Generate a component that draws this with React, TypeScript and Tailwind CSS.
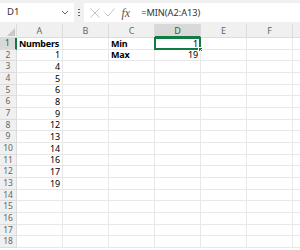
import React from "react";

const cols = ["A", "B", "C", "D", "E", "F", "G"];
const numbers = [1, 4, 5, 6, 8, 9, 12, 13, 14, 16, 17, 19];

type Cell = { text?: string; bold?: boolean; right?: boolean };

function cellFor(r: number, c: number): Cell {
  if (c === 0) {
    if (r === 1) return { text: "Numbers", bold: true };
    if (r >= 2 && r <= 13) return { text: String(numbers[r - 2]), right: true };
  }
  if (c === 2) {
    if (r === 1) return { text: "Min", bold: true };
    if (r === 2) return { text: "Max", bold: true };
  }
  if (c === 3) {
    if (r === 1) return { text: "1", right: true };
    if (r === 2) return { text: "19", right: true };
  }
  return {};
}

export default function App() {
  const rows = Array.from({ length: 18 }, (_, i) => i + 1);
  return (
    <div
      className="w-[300px] h-[250px] overflow-hidden bg-white relative"
      style={{ fontFamily: '"Noto Sans", "Open Sans", sans-serif' }}
    >
      {/* formula bar */}
      <div className="h-[24px] bg-[#f0f0f0] flex items-center gap-[3px] pt-[1px]">
        <div className="h-[19px] w-[74px] bg-white flex items-center justify-between pl-[7px] pr-[5px]">
          <span className="text-[9.5px] text-[#333]">D1</span>
          <svg width="8" height="5" viewBox="0 0 8 5">
            <path d="M1 1 L4 4 L7 1" stroke="#666" strokeWidth="1" fill="none" />
          </svg>
        </div>
        <div className="flex flex-col gap-[1.5px] px-[1px]">
          <div className="w-[1.5px] h-[1.5px] bg-[#666]" />
          <div className="w-[1.5px] h-[1.5px] bg-[#666]" />
          <div className="w-[1.5px] h-[1.5px] bg-[#666]" />
        </div>
        <div className="h-[19px] flex-1 bg-white flex items-center">
          <div className="flex items-center gap-[4px] pl-[6px] pr-[11px]">
            <svg width="10" height="10" viewBox="0 0 10 10">
              <path d="M0.5 0.5 L9.5 9.5 M9.5 0.5 L0.5 9.5" stroke="#c4c4c4" strokeWidth="1" />
            </svg>
            <svg width="11" height="9" viewBox="0 0 11 9">
              <path d="M0.5 4.5 L4 8 L10.5 0.5" stroke="#c4c4c4" strokeWidth="1" fill="none" />
            </svg>
            <span
              className="text-[12px] italic text-[#555] leading-none pl-[3px]"
              style={{ fontFamily: '"Liberation Serif", serif' }}
            >
              fx
            </span>
          </div>
          <span className="text-[9.2px] text-[#333]">=MIN(A2:A13)</span>
        </div>
      </div>
      {/* grid */}
      <div className="grid grid-cols-[17px_repeat(7,46px)]">
        {/* header row */}
        <div className="h-[14px] bg-[#f0f0f0] border-r border-b border-[#dcdcdc] relative">
          <svg className="absolute right-[1px] bottom-[1px]" width="8" height="8" viewBox="0 0 8 8">
            <path d="M8 0 L8 8 L0 8 Z" fill="#c8c8c8" />
          </svg>
        </div>
        {cols.map((c) => (
          <div
            key={c}
            className={
              c === "D"
                ? "h-[14px] bg-[#d9d9d9] border-r border-b-2 border-b-[#107c41] border-r-[#dcdcdc] flex items-center justify-center text-[9px] text-[#0f6b3a] leading-none"
                : "h-[14px] bg-[#f0f0f0] border-r border-b border-[#dcdcdc] flex items-center justify-center text-[9px] text-[#666] leading-none"
            }
          >
            {c === "G" ? "" : c}
          </div>
        ))}
        {rows.map((r) => (
          <React.Fragment key={r}>
            <div
              className={
                r === 1
                  ? "h-[11.67px] bg-[#d9d9d9] border-r-2 border-r-[#107c41] border-b border-b-[#dcdcdc] flex items-center justify-center text-[8.5px] text-[#0f6b3a] leading-none"
                  : "h-[11.67px] bg-[#f0f0f0] border-r border-b border-[#dcdcdc] flex items-center justify-center text-[8.5px] text-[#666] leading-none"
              }
            >
              {r}
            </div>
            {cols.map((c, ci) => {
              const cell = cellFor(r, ci);
              const selected = r === 1 && ci === 3;
              return (
                <div
                  key={c}
                  className={
                    "h-[11.67px] border-r border-b border-[#e8e8e8] flex items-center px-[2px] text-[9px] tracking-[-0.2px] text-black leading-none relative " +
                    (cell.right ? "justify-end " : "justify-start ") +
                    (cell.bold ? "font-bold" : "")
                  }
                >
                  {cell.text}
                  {selected && (
                    <>
                      <div className="absolute left-[-1px] top-[-1px] right-[-1px] bottom-[-1px] border-2 border-[#107c41] pointer-events-none" />
                      <div className="absolute right-[-3px] bottom-[-3px] w-[5px] h-[5px] bg-[#107c41] border border-white" />
                    </>
                  )}
                </div>
              );
            })}
          </React.Fragment>
        ))}
      </div>
    </div>
  );
}
